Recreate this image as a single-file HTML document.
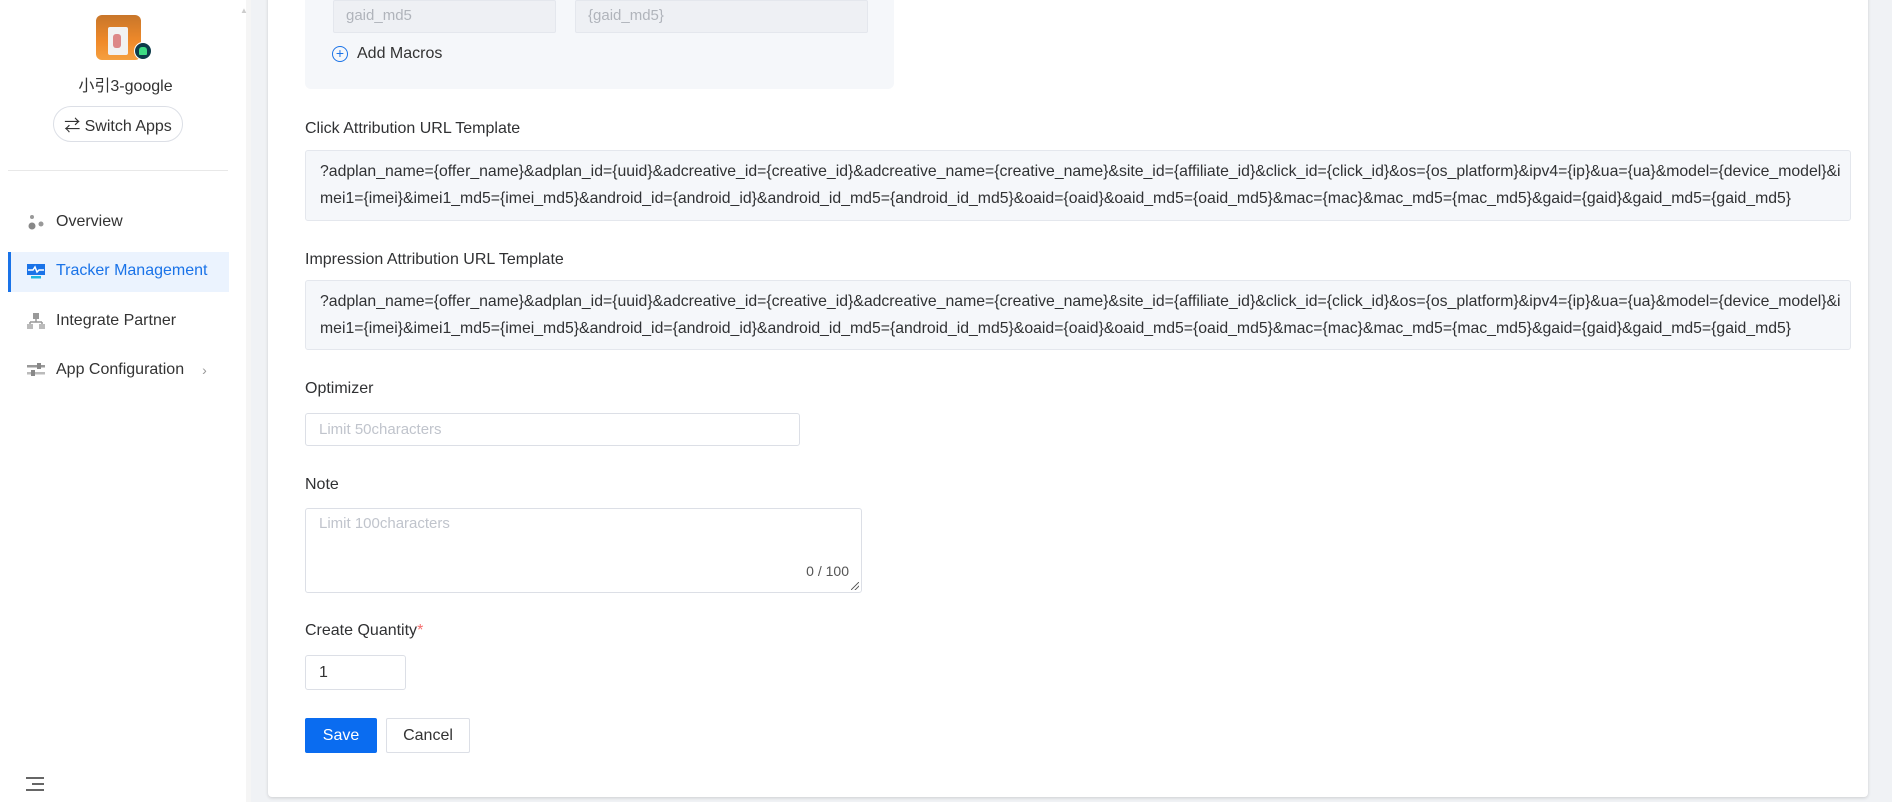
<!DOCTYPE html>
<html><head><meta charset="utf-8"><style>
*{box-sizing:border-box;margin:0;padding:0}
body{width:1892px;height:802px;overflow:hidden;background:#f0f2f5;font-family:"Liberation Sans","Noto Sans CJK SC",sans-serif;color:#303133;position:relative}
.abs{position:absolute}
.side{left:0;top:0;width:251px;height:802px;background:#fff}
.card{left:268px;top:-10px;width:1600px;height:807px;background:#fff;border-radius:4px;box-shadow:0 1px 3px rgba(0,0,0,.15)}
.lbl{font-size:16px;color:#303133;left:305px}
.inp{border:1px solid #dcdfe6;border-radius:3px;background:#fff}
.menu{left:26px;font-size:16px;color:#333;display:flex;align-items:center}
.menu .ic{width:20px;height:20px;margin-right:10px}
.url{left:305px;width:1546px;background:#f5f7fa;border:1px solid #e4e7ed;border-radius:3px;font-size:15.8px;line-height:27px;padding:7px 14px;white-space:nowrap;color:#303133;overflow:hidden}
</style></head><body>
<div class="abs side"></div>
<div class="abs" style="left:246px;top:0;width:5px;height:802px;background:#f5f5f5"></div>
<div class="abs" style="left:240px;top:6px;font-size:8px;color:#ccc">▲</div>
<div class="abs" style="left:96px;top:15px;width:45px;height:45px;border-radius:6px;background:linear-gradient(#c8762a,#f08a2a 60%,#f5a040);overflow:hidden">
 <div class="abs" style="left:12px;top:12px;width:20px;height:28px;background:#f2f2f2;border-radius:2px"></div>
 <div class="abs" style="left:17px;top:19px;width:8px;height:14px;background:#d88;border-radius:3px"></div>
</div>
<div class="abs" style="left:134px;top:42px;width:18px;height:18px;border-radius:50%;background:#0d3b4a;border:1px solid #fff"><div class="abs" style="left:4px;top:4px;width:8px;height:8px;background:#3ddc84;border-radius:3px 3px 1px 1px"></div></div>
<div class="abs" style="left:0;width:251px;top:72px;text-align:center;font-size:16px;color:#333">小引3-google</div>
<div class="abs" style="left:53px;top:106px;width:130px;height:36px;border:1px solid #dcdfe6;border-radius:18px;font-size:16px;color:#333;display:flex;align-items:center;justify-content:center">⇄&nbsp;Switch Apps</div>
<div class="abs" style="left:8px;top:170px;width:220px;height:1px;background:#e8e8e8"></div>
<div class="abs" style="left:8px;top:252px;width:221px;height:40px;background:#ebf3fe;border-left:3px solid #1a73e8"></div>
<div class="abs menu" style="top:212px"><svg class="ic" viewBox="0 0 20 20"><circle cx="6" cy="5" r="2" fill="#999"/><circle cx="6" cy="14" r="3.5" fill="#888"/><circle cx="15" cy="12" r="2.5" fill="#999"/></svg>Overview</div>
<div class="abs menu" style="top:261px;color:#1a73e8"><svg class="ic" viewBox="0 0 20 20"><rect x="1" y="3" width="18" height="11" fill="#1a73e8"/><path d="M2 9h5l2-3 2 5 2-2h5" stroke="#fff" stroke-width="1.5" fill="none"/><rect x="5" y="15" width="10" height="2.5" fill="#1cb5e0"/></svg>Tracker Management</div>
<div class="abs menu" style="top:311px"><svg class="ic" viewBox="0 0 20 20"><rect x="7" y="2" width="6" height="6" fill="#999"/><path d="M10 8v3M4 11h12M4 11v2M16 11v2" stroke="#999" stroke-width="1.5"/><rect x="1" y="13" width="6" height="5" fill="#bbb"/><rect x="13" y="13" width="6" height="5" fill="#bbb"/></svg>Integrate Partner</div>
<div class="abs menu" style="top:360px"><svg class="ic" viewBox="0 0 20 20"><rect x="1" y="5" width="18" height="2.5" fill="#999"/><rect x="1" y="12" width="18" height="2.5" fill="#bbb"/><rect x="11" y="3" width="4" height="6" fill="#888"/><rect x="5" y="10" width="4" height="6" fill="#888"/></svg>App Configuration<span style="margin-left:18px;color:#999;font-size:14px">›</span></div>
<div class="abs" style="left:26px;top:777px;width:18px;height:15px"><div style="height:2px;background:#666;margin-bottom:4px"></div><div style="height:2px;background:#666;margin:0 0 4px 6px"></div><div style="height:2px;background:#666"></div></div>

<div class="abs card"></div>
<div class="abs" style="left:305px;top:-10px;width:589px;height:99px;background:#f5f7fa;border-radius:6px"></div>
<div class="abs" style="left:333px;top:0;width:223px;height:33px;background:#eef0f4;border:1px solid #e4e7ed;border-radius:2px;font-size:15px;color:#b0b4bb;padding:6px 12px">gaid_md5</div>
<div class="abs" style="left:575px;top:0;width:293px;height:33px;background:#eef0f4;border:1px solid #e4e7ed;border-radius:2px;font-size:15px;color:#b0b4bb;padding:6px 12px">{gaid_md5}</div>
<div class="abs" style="left:332px;top:46px;width:16px;height:16px;border:1.5px solid #1a73e8;border-radius:50%;color:#1a73e8;font-size:14px;line-height:12px;text-align:center">+</div>
<div class="abs" style="left:357px;top:45px;font-size:16px;color:#333">Add Macros</div>

<div class="abs lbl" style="top:120px">Click Attribution URL Template</div>
<div class="abs url" style="top:150px;height:71px">?adplan_name={offer_name}&amp;adplan_id={uuid}&amp;adcreative_id={creative_id}&amp;adcreative_name={creative_name}&amp;site_id={affiliate_id}&amp;click_id={click_id}&amp;os={os_platform}&amp;ipv4={ip}&amp;ua={ua}&amp;model={device_model}&amp;i<br>mei1={imei}&amp;imei1_md5={imei_md5}&amp;android_id={android_id}&amp;android_id_md5={android_id_md5}&amp;oaid={oaid}&amp;oaid_md5={oaid_md5}&amp;mac={mac}&amp;mac_md5={mac_md5}&amp;gaid={gaid}&amp;gaid_md5={gaid_md5}</div>

<div class="abs lbl" style="top:251px">Impression Attribution URL Template</div>
<div class="abs url" style="top:280px;height:70px">?adplan_name={offer_name}&amp;adplan_id={uuid}&amp;adcreative_id={creative_id}&amp;adcreative_name={creative_name}&amp;site_id={affiliate_id}&amp;click_id={click_id}&amp;os={os_platform}&amp;ipv4={ip}&amp;ua={ua}&amp;model={device_model}&amp;i<br>mei1={imei}&amp;imei1_md5={imei_md5}&amp;android_id={android_id}&amp;android_id_md5={android_id_md5}&amp;oaid={oaid}&amp;oaid_md5={oaid_md5}&amp;mac={mac}&amp;mac_md5={mac_md5}&amp;gaid={gaid}&amp;gaid_md5={gaid_md5}</div>

<div class="abs lbl" style="top:380px">Optimizer</div>
<div class="abs inp" style="left:305px;top:413px;width:495px;height:33px;font-size:15px;color:#c0c4cc;padding:7px 13px">Limit 50characters</div>

<div class="abs lbl" style="top:476px">Note</div>
<div class="abs inp" style="left:305px;top:508px;width:557px;height:85px;font-size:15px;color:#c0c4cc;padding:6px 13px">Limit 100characters
<div class="abs" style="right:12px;top:54px;color:#555;font-size:14px">0 / 100</div>
<div class="abs" style="right:2px;bottom:2px;width:8px;height:8px;background:linear-gradient(135deg,transparent 45%,#666 45%,#666 55%,transparent 55%,transparent 70%,#666 70%,#666 80%,transparent 80%)"></div></div>

<div class="abs lbl" style="top:622px">Create Quantity<span style="color:#f56c6c">*</span></div>
<div class="abs inp" style="left:305px;top:655px;width:101px;height:35px;font-size:16px;color:#333;padding:8px 13px">1</div>

<div class="abs" style="left:305px;top:718px;width:72px;height:35px;background:#0a6cf0;border-radius:2px;color:#fff;font-size:16px;text-align:center;line-height:35px">Save</div>
<div class="abs" style="left:386px;top:718px;width:84px;height:35px;border:1px solid #dcdfe6;border-radius:2px;color:#333;font-size:16px;text-align:center;line-height:33px">Cancel</div>
</body></html>
